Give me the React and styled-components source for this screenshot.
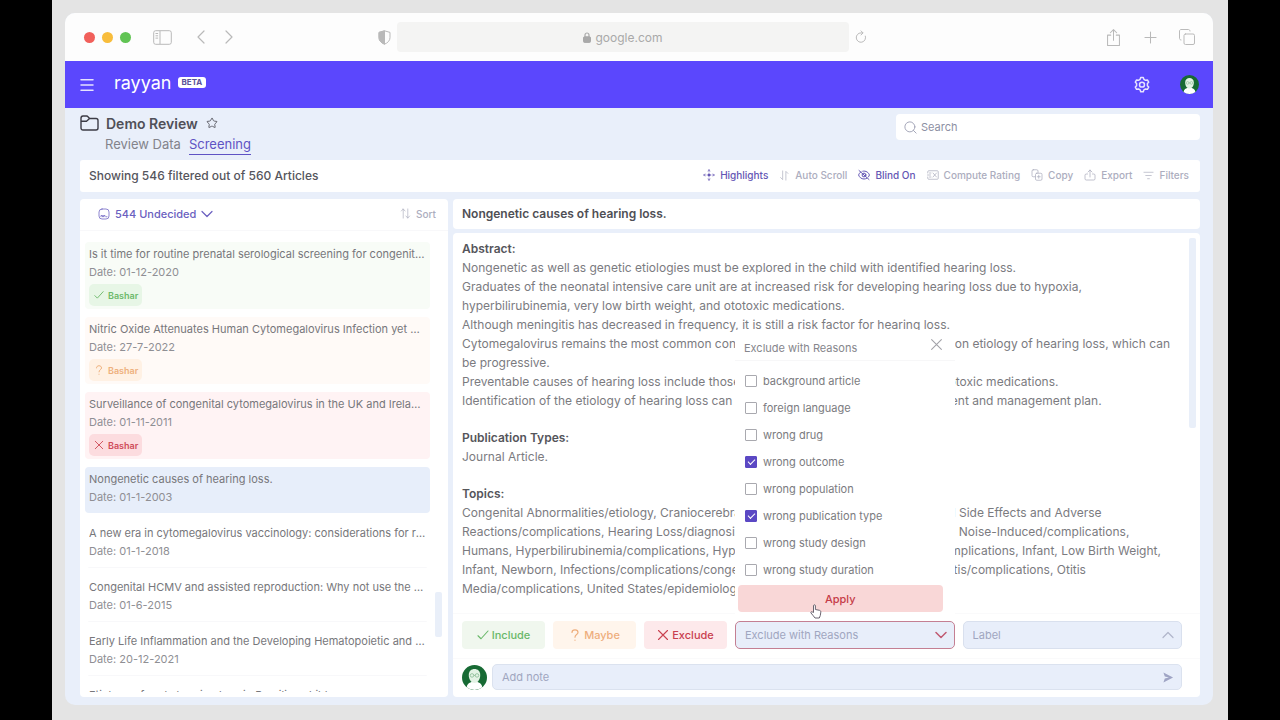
import React from "react";
import styled, { createGlobalStyle, css } from "styled-components";
import { Menu, Star, Search, ChevronLeft, ChevronRight, Copy, Plus } from "lucide-react";

const Global = createGlobalStyle`
  * { box-sizing: border-box; }
  body { margin: 0; background: #000; }
  body, button, input, select { font-family: Inter, "Liberation Sans", sans-serif; }
  h1, h2, h3, p, ul { margin: 0; padding: 0; font-weight: inherit; }
  button { border: 0; background: none; padding: 0; cursor: pointer; color: inherit; }
  a { color: inherit; text-decoration: none; }
  svg { flex: none; display: block; }
`;

const Stage = styled.div`
  min-height: 100vh;
  margin: 0 52px;
  padding: 13px 15px 15px 13px;
  background: #e4e4e4;
  display: flex;
`;
const Window = styled.div`
  flex: 1;
  min-width: 0;
  display: flex;
  flex-direction: column;
  border-radius: 10px;
  overflow: hidden;
  background: #e9effa;
`;

/* Browser chrome */
const Chrome = styled.div`
  height: 48px;
  display: flex;
  align-items: center;
  background: #fdfdfd;
  padding: 0 17px 0 19px;
  color: #b9b9b9;
`;
const Lights = styled.div`
  display: flex;
  gap: 7px;
`;
const Light = styled.span`
  width: 11px;
  height: 11px;
  border-radius: 50%;
  background: ${(p) => p.$color};
`;
const ChromeLeft = styled.div`
  flex: 313 1 0;
  display: flex;
  align-items: center;
`;
const ChromeRight = styled.div`
  flex: 347 1 0;
  display: flex;
  align-items: center;
  gap: 18px;
`;
const ChromeNav = styled.div`
  display: flex;
  align-items: center;
  gap: 17px;
  margin-left: 22px;
`;
const History = styled.div`
  display: flex;
  gap: 4px;
`;
const ShieldSlot = styled.div`
  margin-left: auto;
  margin-right: 6px;
`;
const ReloadSlot = styled.div`
  margin-left: 5px;
  margin-right: auto;
`;
const Address = styled.div`
  flex: 0 1 452px;
  height: 30px;
  display: flex;
  align-items: center;
  justify-content: center;
  gap: 4px;
  border-radius: 4px;
  background: #f4f4f3;
  color: #a9a9a9;
  font-size: 12px;
`;

/* Application bar */
const AppBar = styled.header`
  height: 47px;
  display: flex;
  align-items: center;
  padding: 0 14px 0 13px;
  background: #5b47fd;
  color: #e6e2ff;
`;
const Brand = styled.div`
  display: flex;
  align-items: center;
  gap: 6px;
  margin: 0 auto 4px 18px;
  color: #fff;
  font-size: 18px;
  line-height: 24px;
`;
const Beta = styled.span`
  padding: 0 4px;
  border-radius: 3px;
  background: #fff;
  color: #5b5499;
  font-size: 8px;
  font-weight: 700;
  line-height: 11px;
`;
const BarButtons = styled.div`
  display: flex;
  align-items: center;
  gap: 29px;
`;

const Content = styled.main`
  flex: 1;
  min-height: 0;
  display: flex;
  flex-direction: column;
  padding: 6px 13px 8px 15px;
`;
const Heading = styled.div`
  display: flex;
  justify-content: space-between;
  align-items: flex-start;
  height: 46px;
`;
const TitleRow = styled.div`
  display: flex;
  align-items: center;
  height: 18px;
  color: #505058;
`;
const Title = styled.h1`
  margin: 0 8px 0 7px;
  font-size: 14px;
  font-weight: 600;
`;
const Tabs = styled.nav`
  display: flex;
  gap: 8px;
  margin-top: 3px;
  padding-left: 25px;
`;
const Tab = styled.a`
  font-size: 13px;
  line-height: 19px;
  color: ${(p) => (p.$active ? "#5f53c4" : "#83838b")};
  border-bottom: 1px solid ${(p) => (p.$active ? "#5f53c4" : "transparent")};
`;
const SearchBox = styled.label`
  flex: 0 1 304px;
  height: 26px;
  display: flex;
  align-items: center;
  gap: 3px;
  padding: 0 7px;
  border-radius: 4px;
  background: #fff;
  color: #9fa1b4;
`;
const SearchInput = styled.input`
  flex: 1;
  min-width: 0;
  border: 0;
  outline: 0;
  padding: 0;
  background: none;
  font-size: 11px;
  &::placeholder { color: #8d8fa3; opacity: 1; }
`;

const Toolbar = styled.div`
  height: 32px;
  display: flex;
  align-items: center;
  justify-content: space-between;
  padding: 0 11px 2px 9px;
  background: #fff;
  border-radius: 3px;
`;
const Count = styled.p`
  font-size: 12px;
  font-weight: 500;
  color: #55555c;
`;
const Tools = styled.div`
  display: flex;
  gap: 11px;
`;
const Tool = styled.button`
  display: flex;
  align-items: center;
  gap: 5px;
  font-size: 10px;
  font-weight: 500;
  color: ${(p) => (p.$active ? "#6456b4" : "#acadbe")};
`;

const Panels = styled.div`
  flex: 1;
  min-height: 0;
  display: grid;
  grid-template-columns: minmax(0, 368fr) minmax(0, 747fr);
  gap: 5px;
  margin-top: 7px;
`;
const ListPanel = styled.section`
  display: flex;
  flex-direction: column;
  min-height: 0;
  padding-bottom: 5px;
  background: #fff;
  border-radius: 4px;
  position: relative;
`;
const ListHead = styled.div`
  height: 32px;
  display: flex;
  align-items: center;
  justify-content: space-between;
  padding: 0 12px 2px 18px;
  border-bottom: 1px solid #f8f8fa;
`;
const Filter = styled.button`
  display: flex;
  align-items: center;
  gap: 5px;
  font-size: 11px;
  font-weight: 500;
  color: #6a5fc0;
`;
const ListBody = styled.ul`
  flex: 1 1 0;
  min-height: 0;
  overflow: hidden;
  list-style: none;
  padding: 11px 18px 0 5px;
`;
const tones = {
  include: { card: "#f8fcf7", tag: "#e7f6e6", text: "#6cb96a" },
  maybe: { card: "#fffaf7", tag: "#fff1e4", text: "#eeb07c" },
  exclude: { card: "#fff3f4", tag: "#fcdcdf", text: "#cf4b58" },
};
const Article = styled.li`
  padding: 3px 4px ${(p) => (p.$tone ? 3 : 7)}px;
  margin-bottom: 8px;
  border-radius: 4px;
  background: ${(p) => (p.$selected ? "#e7eefa" : p.$tone ? tones[p.$tone].card : "#fff")};
  ${(p) => !p.$tone && !p.$selected && css`box-shadow: 0 4px 0 -3px #f8f8fa;`}
`;
const ArticleTitle = styled.h3`
  overflow: hidden;
  white-space: nowrap;
  text-overflow: ellipsis;
  font-size: 11px;
  line-height: 18px;
  color: #77777b;
`;
const ArticleDate = styled.p`
  font-size: 11px;
  line-height: 18px;
  color: #8f8f94;
`;
const Tag = styled.span`
  display: inline-flex;
  align-items: center;
  gap: 4px;
  height: 22px;
  margin-top: 3px;
  padding: 0 4px 0 5px;
  border-radius: 5px;
  vertical-align: top;
  background: ${(p) => tones[p.$tone].tag};
  color: ${(p) => tones[p.$tone].text};
  font-size: 9px;
  font-weight: 600;
`;
const Thumb = styled.span`
  position: absolute;
  right: ${(p) => p.$right}px;
  top: ${(p) => p.$top};
  height: ${(p) => p.$height};
  width: 7px;
  border-radius: 2px;
  background: #e9eff9;
`;

const Detail = styled.section`
  display: flex;
  flex-direction: column;
  gap: 4px;
  min-height: 0;
`;
const DetailTitle = styled.h2`
  height: 30px;
  padding: 0 9px;
  border-radius: 4px;
  background: #fff;
  font-size: 12px;
  font-weight: 600;
  line-height: 30px;
  color: #4f4f55;
`;
const DetailBody = styled.div`
  flex: 1;
  display: flex;
  flex-direction: column;
  border-radius: 4px;
  background: #fff;
  position: relative;
`;
const Text = styled.div`
  flex: 1;
  padding: 6px 18px 0 9px;
  display: flex;
  flex-direction: column;
  gap: 18px;
`;
const Section = styled.section`
  font-size: 12px;
  line-height: 19px;
  color: #7b7b7f;
  white-space: nowrap;
`;
const SectionTitle = styled.h3`
  font-size: 12px;
  font-weight: 600;
  color: #55555b;
`;
const Actions = styled.div`
  display: flex;
  gap: 8px;
  padding: 7px 18px 9px 9px;
  border-top: 1px solid #fafafb;
  border-bottom: 1px solid #fafafb;
`;
const actionTones = {
  include: { bg: "#f0f7ee", text: "#69b869" },
  maybe: { bg: "#fff5ec", text: "#eeae7d" },
  exclude: { bg: "#fde9eb", text: "#c9404f" },
};
const Action = styled.button`
  flex: none;
  width: 83px;
  height: 28px;
  display: flex;
  align-items: center;
  justify-content: center;
  gap: 3px;
  border-radius: 4px;
  background: ${(p) => actionTones[p.$tone].bg};
  color: ${(p) => actionTones[p.$tone].text};
  font-size: 11px;
  font-weight: 500;
`;
const Picker = styled.div`
  flex: 1;
  position: relative;
  display: flex;
  align-items: center;
  color: ${(p) => (p.$open ? "#c05a72" : "#b0b5ca")};
  > svg { position: absolute; right: 8px; pointer-events: none; }
`;
const Select = styled.select`
  appearance: none;
  width: 100%;
  height: 28px;
  padding: 0 9px;
  border: 1px solid ${(p) => (p.$open ? "#c47f93" : "#d9e0ee")};
  border-radius: 5px;
  background: #e8eefa;
  color: #a0a6c0;
  font-size: 11px;
`;
const Popup = styled.div`
  position: absolute;
  left: 0;
  right: 0;
  bottom: calc(100% + 6px);
  padding: 0 0 3px;
  background: #fff;
`;
const PopupHead = styled.div`
  display: flex;
  justify-content: space-between;
  align-items: flex-start;
  height: 31px;
  padding: 8px 12px 0 9px;
  margin-bottom: 6px;
  border-bottom: 1px solid #f7f7f8;
  font-size: 11px;
  line-height: 20px;
  color: #86868c;
`;
const Close = styled.button`
  color: #a3a3a9;
`;
const Reason = styled.label`
  display: flex;
  align-items: center;
  gap: 6px;
  height: 27px;
  padding-left: 10px;
  font-size: 11px;
  color: #7b7b80;
`;
const Tick = styled.input`
  appearance: none;
  width: 12px;
  height: 12px;
  margin: 0;
  border: 1px solid #a9a9af;
  border-radius: 1px;
  background: #fff;
  display: grid;
  place-items: center;
  &:checked { background: #5b48c4; border-color: #5b48c4; }
  &:checked::after {
    content: "";
    width: 6px;
    height: 3px;
    margin-bottom: 2px;
    border: solid #fff;
    border-width: 0 0 1px 1px;
    transform: rotate(-45deg);
  }
`;
const Apply = styled.button`
  display: block;
  width: calc(100% - 15px);
  height: 27px;
  margin: 2px 12px 0 3px;
  border-radius: 4px;
  background: #f9d7d7;
  color: #c53c48;
  font-size: 11px;
  font-weight: 500;
`;
const Pointer = styled.svg`
  position: absolute;
  left: 75px;
  bottom: -4px;
`;
const NoteRow = styled.form`
  display: flex;
  align-items: center;
  gap: 5px;
  padding: 5px 18px 7px 9px;
`;
const NoteBox = styled.div`
  flex: 1;
  height: 26px;
  display: flex;
  align-items: center;
  padding: 0 7px 0 9px;
  border: 1px solid #dbe2ef;
  border-radius: 5px;
  background: #e8eefa;
  color: #9fa4c4;
`;
const NoteInput = styled(SearchInput)`
  &::placeholder { color: #a0a6c0; }
`;

const Icon = ({ size = 12, sw = 1.5, children, ...rest }) => (
  <svg width={size} height={size} viewBox="0 0 24 24" fill="none" stroke="currentColor" strokeWidth={sw} strokeLinecap="round" strokeLinejoin="round" aria-hidden="true" {...rest}>
    {children}
  </svg>
);
const SidebarIcon = () => (
  <svg width="19" height="15" viewBox="0 0 19 15" fill="none" stroke="currentColor" aria-hidden="true">
    <rect x="0.7" y="0.7" width="17.6" height="13.6" rx="2" />
    <path d="M7 1v13M2.5 3.5h2.6M2.5 5.8h2.6M2.5 8.1h2.6" />
  </svg>
);
const ShieldIcon = () => (
  <svg width="13" height="15" viewBox="0 0 13 15" fill="none" stroke="currentColor" aria-hidden="true">
    <path d="M6.5 .8 12 2.4v5.2c0 3-2.2 5.2-5.5 6.6C3.2 12.8 1 10.6 1 7.6V2.4z" />
    <path d="M6.5 .8v13.4C3.2 12.8 1 10.6 1 7.6V2.4z" fill="currentColor" />
  </svg>
);
const LockIcon = () => (
  <svg width="8" height="11" viewBox="0 0 8 11" fill="none" stroke="currentColor" aria-hidden="true">
    <path d="M2 5V3a2 2 0 0 1 4 0v2" strokeWidth="1.2" />
    <rect x="0.5" y="4.8" width="7" height="5.6" rx="1" fill="currentColor" />
  </svg>
);
const ReloadIcon = () => (
  <Icon size={14} sw={1.7}><path d="M19.5 10.5A8 8 0 1 1 12 5h3M12 1.5 15.5 5 12 8.500" /></Icon>
);
const ShareIcon = ({ size }) => (
  <Icon size={size} sw={1.3}><path d="M8.5 9H4.5v13h15V9h-4M12 15.500V2M8 6l4-4 4 4" /></Icon>
);
const FolderIcon = () => (
  <svg width="19" height="16" viewBox="0 0 19 16" fill="none" stroke="#3c3c46" strokeWidth="1.4" strokeLinejoin="round" aria-hidden="true">
    <path d="M1 3.200C1 1.900 1.800 1 3 1h3.600c.6 0 1 .2 1.400.7L9.600 3.500H16c1.200 0 2 .8 2 2V13c0 1.200-.8 2-2 2H3c-1.200 0-2-.8-2-2zM1 6.300h5.500L9.600 3.500" />
  </svg>
);
const GearIcon = () => (
  <Icon size={18} sw={2}>
    <path d="M9.5 4.400 10.300 2h3.400l.8 2.400 2.200 1.300 2.500-.5 1.700 3-1.700 1.900v2.800l1.700 1.900-1.700 3-2.500-.5-2.200 1.300-.8 2.400h-3.400l-.8-2.400-2.200-1.300-2.500.5-1.700-3 1.700-1.900v-2.800L3.100 8.200l1.700-3 2.500.5z" />
    <circle cx="12" cy="11.500" r="3.300" />
  </Icon>
);
const Avatar = ({ size }) => (
  <svg width={size} height={size} viewBox="0 0 24 24" role="img" aria-label="Profile">
    <circle cx="12" cy="12" r="12" fill="#176a34" />
    <path d="M4.500 21.400c.6-3.900 3.400-5.300 7.500-5.300s6.900 1.400 7.500 5.300A12 12 0 0 1 12 24a12 12 0 0 1-7.500-2.600z" fill="#fff" />
    <path d="M6.500 9.500C6.500 5.800 9 3.800 12 3.800s5.500 2 5.500 5.700c0 4.500-2.500 7.700-5.500 7.700s-5.500-3.200-5.500-7.700z" fill="#e3f3e5" />
    <g fill="none" stroke="#8bbd96" strokeWidth=".8"><circle cx="9.600" cy="10" r="1.700" /><circle cx="14.400" cy="10" r="1.700" /><path d="M11.300 10h1.400" /></g>
  </svg>
);
const HighlightIcon = () => (
  <Icon sw={1.2}><circle cx="12" cy="12" r="2.500" fill="currentColor" /><path d="M12 1v5M12 18v5M1 12h5M18 12h5M10 4l2-2.500L14 4M10 20l2 2.500 2-2.500M4 10l-2.500 2L4 14M20 10l2.500 2-2.500 2" /></Icon>
);
const ScrollIcon = () => <Icon size={11}><path d="M8 2v19l-4.500-4.500M15 22V3l4.500 4.500" /></Icon>;
const SortIcon = () => <Icon size={11}><path d="M7 22V2L3 6.500M7 2l4 4.500M17 2v20l-4-4.500M17 22l4-4.500" /></Icon>;
const BlindIcon = () => (
  <Icon sw={2}><path d="M2 3l20 18M6 5.500C3.500 7.300 1.800 10 1.200 12c1.500 4.500 5.500 8 10.800 8 2 0 4-.6 5.600-1.500M9.500 4.400C16 3 21.300 7 22.800 12c-.4 1.500-1.200 2.900-2.300 4.100" /><circle cx="12" cy="12" r="3.800" /></Icon>
);
const RatingIcon = () => (
  <Icon><path d="M1.500 8V5.500a2 2 0 0 1 2-2h17a2 2 0 0 1 2 2v13a2 2 0 0 1-2 2h-17a2 2 0 0 1-2-2V16M1 12h6M12 8l7 8M19 8l-7 8M5 8h3M5 16h3" /></Icon>
);
const CopyIcon = () => (
  <Icon><rect x="2" y="1.500" width="12" height="14" rx="2.500" /><rect x="9" y="8.500" width="13" height="14" rx="2.500" fill="#fff" /><path d="M12.500 15.500h6M15.500 12.500v6" /></Icon>
);
const ExportIcon = () => (
  <Icon><path d="M7 10H4.500a2.500 2.500 0 0 0-2.500 2.500v7A2.500 2.500 0 0 0 4.500 22h15a2.500 2.500 0 0 0 2.500-2.500v-7a2.500 2.500 0 0 0-2.500-2.500H17M12 16V2M8 6l4-4 4 4" /></Icon>
);
const FilterIcon = () => <Icon size={11}><path d="M2 5h20M6 12h12M10 19h4" /></Icon>;
const UndecidedIcon = () => (
  <Icon><rect x="2" y="2" width="20" height="20" rx="6" /><path d="M6 17.500v-2.500h3v2.500M11 17.500v-2.500h3v2.500M16.500 17.500h1.500" sw="1" /></Icon>
);
const Chevron = ({ up, sw = 1.2 }) => (
  <svg width="12" height="8" viewBox="0 0 12 8" fill="none" stroke="currentColor" strokeWidth={sw} strokeLinecap="round" strokeLinejoin="round" aria-hidden="true">
    <path d={up ? "M1 6.500 6 1.500l5 5" : "M1 1.500l5 5 5-5"} />
  </svg>
);
const CheckIcon = ({ size }) => <Icon size={size} sw={2.2}><path d="M2 13.500l6 6L22 4" /></Icon>;
const CrossIcon = ({ size, sw = 2.2 }) => <Icon size={size} sw={sw}><path d="M3 3l18 18M21 3 3 21" /></Icon>;
const QuestionIcon = ({ size }) => (
  <Icon size={size} sw={2.4}><path d="M6 7C6 3.700 8.500 1.800 12 1.800S18 3.800 18 7c0 4.500-6 4-6 9.500M12 22v.3" /></Icon>
);
const SendIcon = () => (
  <svg width="12" height="11" viewBox="0 0 24 24" fill="currentColor" aria-hidden="true"><path d="M2 1 23 12 2 23l3-9 9-2-9-2z" /></svg>
);

const tools = [
  ["Highlights", HighlightIcon, true],
  ["Auto Scroll", ScrollIcon],
  ["Blind On", BlindIcon, true],
  ["Compute Rating", RatingIcon],
  ["Copy", CopyIcon],
  ["Export", ExportIcon],
  ["Filters", FilterIcon],
];

const articles = [
  { title: "Is it time for routine prenatal serological screening for congenital cytomegalovirus?", date: "01-12-2020", tone: "include" },
  { title: "Nitric Oxide Attenuates Human Cytomegalovirus Infection yet Disrupts Neural Cells", date: "27-7-2022", tone: "maybe" },
  { title: "Surveillance of congenital cytomegalovirus in the UK and Ireland: a review", date: "01-11-2011", tone: "exclude" },
  { title: "Nongenetic causes of hearing loss.", date: "01-1-2003", selected: true },
  { title: "A new era in cytomegalovirus vaccinology: considerations for rational design", date: "01-1-2018" },
  { title: "Congenital HCMV and assisted reproduction: Why not use the standard tests", date: "01-6-2015" },
  { title: "Early Life Inflammation and the Developing Hematopoietic and Immune Systems", date: "20-12-2021" },
  { title: "Etiology of early hearing loss in Brazilian children.", date: "01-1-2009" },
];

const sections = [
  ["Abstract:", [
    "Nongenetic as well as genetic etiologies must be explored in the child with identified hearing loss.",
    "Graduates of the neonatal intensive care unit are at increased risk for developing hearing loss due to hypoxia,",
    "hyperbilirubinemia, very low birth weight, and ototoxic medications.",
    "Although meningitis has decreased in frequency, it is still a risk factor for hearing loss.",
    "Cytomegalovirus remains the most common congenital infection and is the most common etiology of hearing loss, which can",
    "be progressive.",
    "Preventable causes of hearing loss include those due to noise exposure, trauma, or ototoxic medications.",
    "Identification of the etiology of hearing loss can facilitate the choice of the best treatment and management plan.",
  ]],
  ["Publication Types:", ["Journal Article."]],
  ["Topics:", [
    "Congenital Abnormalities/etiology, Craniocerebral Trauma/complications, Drug-Related Side Effects and Adverse",
    "Reactions/complications, Hearing Loss/diagnosis/epidemiology/etiology, Hearing Loss, Noise-Induced/complications,",
    "Humans, Hyperbilirubinemia/complications, Hypertension, Pulmonary/drug therapy/complications, Infant, Low Birth Weight,",
    "Infant, Newborn, Infections/complications/congenital, Risk Factors, Prognosis, Meningitis/complications, Otitis",
    "Media/complications, United States/epidemiology.",
  ]],
];

const reasons = [
  ["background article"], ["foreign language"], ["wrong drug"], ["wrong outcome", true],
  ["wrong population"], ["wrong publication type", true], ["wrong study design"], ["wrong study duration"],
];

const toneIcons = { include: CheckIcon, maybe: QuestionIcon, exclude: CrossIcon };
const ToneIcon = ({ tone, size }) => {
  const Glyph = toneIcons[tone];
  return <Glyph size={size} />;
};

export default function App() {
  return (
    <>
      <Global />
      <Stage>
        <Window>
          <Chrome>
            <ChromeLeft>
              <Lights>
                <Light $color="#f1605b" /><Light $color="#f8bd3c" /><Light $color="#61c454" />
              </Lights>
              <ChromeNav>
                <SidebarIcon />
                <History>
                  <ChevronLeft size={24} strokeWidth={1.2} />
                  <ChevronRight size={24} strokeWidth={1.2} />
                </History>
              </ChromeNav>
              <ShieldSlot><ShieldIcon /></ShieldSlot>
            </ChromeLeft>
            <Address><LockIcon />google.com</Address>
            <ChromeRight>
              <ReloadSlot><ReloadIcon /></ReloadSlot>
              <ShareIcon size={19} />
              <Plus size={19} strokeWidth={1.3} />
              <Copy size={18} strokeWidth={1.3} />
            </ChromeRight>
          </Chrome>
          <AppBar>
            <button aria-label="Menu"><Menu size={18} strokeWidth={2} /></button>
            <Brand>rayyan<Beta>BETA</Beta></Brand>
            <BarButtons>
              <button aria-label="Settings"><GearIcon /></button>
              <Avatar size={19} />
            </BarButtons>
          </AppBar>
          <Content>
            <Heading>
              <div>
                <TitleRow>
                  <FolderIcon />
                  <Title>Demo Review</Title>
                  <Star size={12} strokeWidth={1.7} />
                </TitleRow>
                <Tabs>
                  <Tab href="#data">Review Data</Tab>
                  <Tab href="#screening" $active>Screening</Tab>
                </Tabs>
              </div>
              <SearchBox>
                <Search size={15} strokeWidth={1.5} />
                <SearchInput placeholder="Search" aria-label="Search" />
              </SearchBox>
            </Heading>
            <Toolbar>
              <Count>Showing 546 filtered out of 560 Articles</Count>
              <Tools>
                {tools.map(([label, Glyph, active]) => (
                  <Tool key={label} $active={active}><Glyph />{label}</Tool>
                ))}
              </Tools>
            </Toolbar>
            <Panels>
              <ListPanel>
                <ListHead>
                  <Filter><UndecidedIcon />544 Undecided<Chevron /></Filter>
                  <Tool><SortIcon />Sort</Tool>
                </ListHead>
                <ListBody>
                  {articles.map((a) => (
                    <Article key={a.title} $tone={a.tone} $selected={a.selected}>
                      <ArticleTitle>{a.title}</ArticleTitle>
                      <ArticleDate>Date: {a.date}</ArticleDate>
                      {a.tone && <Tag $tone={a.tone}><ToneIcon tone={a.tone} size={10} />Bashar</Tag>}
                    </Article>
                  ))}
                </ListBody>
                <Thumb $right={6} $top="79%" $height="9%" />
              </ListPanel>
              <Detail>
                <DetailTitle>Nongenetic causes of hearing loss.</DetailTitle>
                <DetailBody>
                  <Text>
                    {sections.map(([title, lines]) => (
                      <Section key={title}>
                        <SectionTitle>{title}</SectionTitle>
                        {lines.map((line) => <p key={line}>{line}</p>)}
                      </Section>
                    ))}
                  </Text>
                  <Thumb $right={4} $top="1%" $height="41%" />
                  <Actions>
                    <Action $tone="include"><ToneIcon tone="include" size={12} />Include</Action>
                    <Action $tone="maybe"><ToneIcon tone="maybe" size={12} />Maybe</Action>
                    <Action $tone="exclude"><ToneIcon tone="exclude" size={12} />Exclude</Action>
                    <Picker $open>
                      <Select $open aria-label="Exclude with Reasons"><option>Exclude with Reasons</option></Select>
                      <Chevron sw={1.5} />
                      <Popup>
                        <PopupHead>
                          Exclude with Reasons
                          <Close aria-label="Close"><CrossIcon size={13} sw={2} /></Close>
                        </PopupHead>
                        {reasons.map(([label, on]) => (
                          <Reason key={label}><Tick type="checkbox" defaultChecked={on} />{label}</Reason>
                        ))}
                        <Apply>Apply</Apply>
                        <Pointer width="12" height="15" viewBox="0 0 12 15" fill="#fff" stroke="#6b6470" strokeWidth="1" strokeLinejoin="round" aria-hidden="true">
                          <path d="M3.500 8.500V1.800c0-1.400 1.900-1.400 1.900 0v3.700l4 .8c1 .2 1.500.8 1.400 1.800l-.5 3.400-1 2.500H5L3.300 11.800 1 9c-.6-1 .6-1.700 1.400-1z" />
                        </Pointer>
                      </Popup>
                    </Picker>
                    <Picker>
                      <Select aria-label="Label"><option>Label</option></Select>
                      <Chevron up />
                    </Picker>
                  </Actions>
                  <NoteRow>
                    <Avatar size={25} />
                    <NoteBox>
                      <NoteInput placeholder="Add note" aria-label="Add note" />
                      <button type="button" aria-label="Send"><SendIcon /></button>
                    </NoteBox>
                  </NoteRow>
                </DetailBody>
              </Detail>
            </Panels>
          </Content>
        </Window>
      </Stage>
    </>
  );
}
